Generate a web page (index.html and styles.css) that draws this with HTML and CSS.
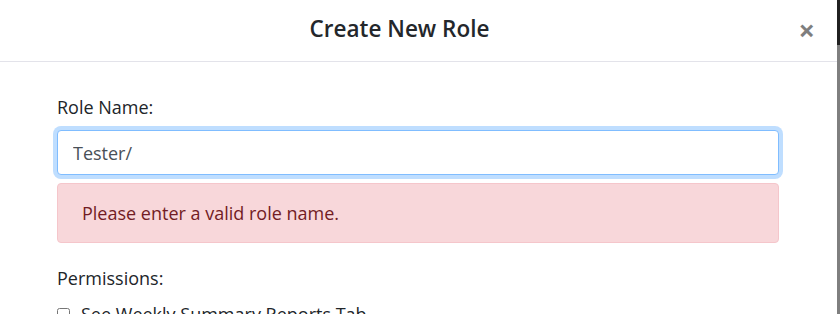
FILE: index.html
```html
<!DOCTYPE html>
<html lang="en">
<head>
    <meta charset="UTF-8">
    <meta name="viewport" content="width=device-width, initial-scale=1.0">
    <title>Create New Role</title>
    <link rel="stylesheet" href="styles.css">
</head>
<body>
    <div class="modal-content">
        <div class="modal-header">
            <h5 class="modal-title">Create New Role</h5>
            <button type="button" class="close" aria-label="Close">&times;</button>
        </div>
        <div class="modal-body">
            <form id="role-form">
                <div class="form-group">
                    <label for="role-name">Role Name:</label>
                    <input type="text" id="role-name" class="form-control is-focused" value="Tester/">
                    <div class="alert alert-danger">Please enter a valid role name.</div>
                </div>
                <div class="form-group">
                    <label>Permissions:</label>
                    <label class="check-row">
                        <input type="checkbox" name="perm-weekly">
                        <span>See Weekly Summary Reports Tab</span>
                    </label>
                </div>
            </form>
        </div>
    </div>
    <div class="backdrop-edge"></div>
</body>
</html>
```

FILE: styles.css
```css
:root {
    --text-color: #212529;
    --input-text: #495057;
    --border-color: #e3e3ea;
    --focus-border: #80bdff;
    --focus-ring: rgba(0, 123, 255, 0.25);
    --alert-bg: #f8d7da;
    --alert-border: #f5c6cb;
    --alert-text: #721c24;
}
html, body {
    height: 100%;
}
body {
    font-family: "Segoe UI", "Open Sans", "Noto Sans", sans-serif;
    font-size: 18px;
    line-height: 1.5;
    color: var(--text-color);
    margin: 0;
    display: flex;
    background-color: #7f7f7f;
    overflow: hidden;
}
.modal-content {
    width: 837px;
    background-color: #ffffff;
    flex-shrink: 0;
}
.backdrop-edge {
    flex: 1;
    background: linear-gradient(to bottom, #202020 0, #202020 45px, #7f7f7f 45px);
}
.modal-header {
    display: flex;
    align-items: center;
    height: 62px;
    border-bottom: 1px solid var(--border-color);
    padding: 0 22px 0 24px;
    box-sizing: border-box;
}
.modal-title {
    flex: 1;
    margin: 0 0 3px;
    text-align: center;
    font-size: 22.5px;
    font-weight: 600;
    line-height: 1.5;
    color: #24272b;
}
.close {
    background: none;
    border: none;
    padding: 0;
    width: 40px;
    font-family: "Segoe UI", "Open Sans", sans-serif;
    font-size: 28.8px;
    font-weight: 700;
    line-height: 1;
    color: #000;
    opacity: 0.5;
    cursor: pointer;
    text-align: right;
}
.modal-body {
    padding: 32px 58px 0 57px;
}
.form-group {
    margin-bottom: 22px;
}
label {
    display: block;
    margin-bottom: 9px;
}
.form-control {
    display: block;
    width: 100%;
    height: 45px;
    padding: 6px 15px;
    font-family: inherit;
    font-size: 18px;
    color: var(--input-text);
    border: 1px solid #ced4da;
    border-radius: 4px;
    box-sizing: border-box;
    outline: none;
}
.form-control.is-focused {
    border-color: var(--focus-border);
    box-shadow: 0 0 0 4px var(--focus-ring);
}
.alert {
    margin-top: 8px;
    padding: 15.5px 24px;
    border: 1px solid var(--alert-border);
    border-radius: 4px;
    background-color: var(--alert-bg);
    color: var(--alert-text);
}
.check-row {
    display: flex;
    align-items: center;
    gap: 11px;
    margin-top: 0;
}
.check-row input {
    margin: 0;
    width: 13px;
    height: 13px;
}
```
